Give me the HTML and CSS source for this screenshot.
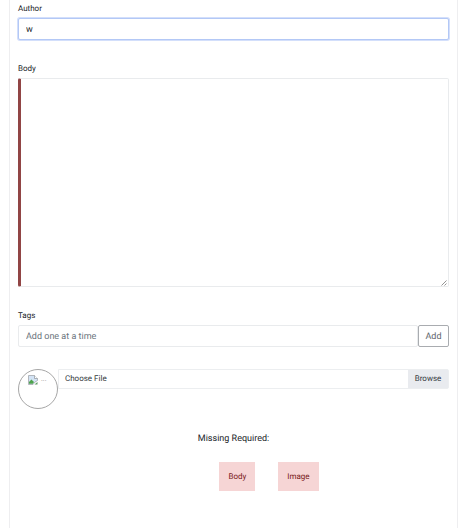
FILE: index.html
```html
<!DOCTYPE html>
<html lang="en">
<head>
<meta charset="utf-8">
<title>Post</title>
<link rel="stylesheet" href="styles.css">
</head>
<body>
<form class="card">
  <label class="label" for="author">Author</label>
  <input class="input focused" id="author" value="w">
  <label class="label body-label" for="body">Body</label>
  <div class="area-wrap">
    <textarea class="area" id="body"></textarea>
    <svg class="grip" viewBox="0 0 6 6"><path d="M.5 5.5l5-5M3.5 5.5l2-2"/></svg>
  </div>
  <label class="label tags-label" for="tags">Tags</label>
  <div class="tags">
    <input class="input" id="tags" placeholder="Add one at a time">
    <button class="add" type="button">Add</button>
  </div>
  <div class="upload">
    <div class="avatar">
      <svg class="broken" viewBox="0 0 10 10">
        <path d="M.5.5h6l3 3v2L7 7 5 9.5H.5z" fill="#d3e3f5" stroke="#a3a8ad" stroke-width=".8"/>
        <path d="M6.5.5v3h3" fill="#fff" stroke="#8e9499" stroke-width=".7"/>
        <path d="M1 8.8V7l2.4-2.4L6 7 4.8 8.8z" fill="#4ea24b"/>
        <path d="M6.5 9.5l3-2.5v2.5z" fill="#5c9b62"/>
      </svg>
      <span>...</span>
    </div>
    <div class="file"><span class="file-name">Choose File</span><span class="browse">Browse</span></div>
  </div>
  <p class="missing">Missing Required:</p>
  <div class="badges"><span class="badge">Body</span><span class="badge">Image</span></div>
</form>
</body>
</html>
```
FILE: styles.css
```css
* { box-sizing: border-box; }
body { margin: 0; background: #fff; font-family: Roboto, sans-serif; color: #212529; height: 528px; overflow: hidden; text-rendering: geometricPrecision; }
.card { width: 449px; height: 528px; margin-left: 9px; padding: 3px 8px 0; border: solid #eeeef0; border-width: 0 1px; }
.label { display: block; height: 12px; line-height: 12px; font-size: 8px; font-weight: 400; }
.input { display: block; width: 100%; height: 22px; margin: 0; padding: 1px 7px 0; border: 1px solid #e9ebed; border-radius: 2px; font: 9px Roboto, sans-serif; color: #343a40; outline: 0; text-rendering: geometricPrecision; }
.input::placeholder { color: #6c757d; opacity: 1; }
.focused { margin-top: 3px; border-color: #b3c8f6; box-shadow: 0 0 0 1px #d3dffb; color: #212529; }
.body-label { margin-top: 23px; }
.area-wrap { position: relative; height: 209px; margin-top: 3px; }
.area { display: block; width: 100%; height: 100%; resize: none; border: 1px solid #e9ebed; border-left: 3px solid #914545; border-radius: 2px; outline: 0; }
.grip { position: absolute; right: 2px; bottom: 1px; width: 6px; height: 6px; fill: none; stroke: #777; stroke-width: .8; }
.tags-label { margin-top: 23px; }
.tags { display: flex; margin-top: 3px; }
.tags .input { flex: 1; }
.add { width: 31px; height: 22px; padding: 1px 0 0; border: 1px solid #a9acb0; border-radius: 2px; background: #fff; color: #5f666d; font: 9px Roboto, sans-serif; text-rendering: geometricPrecision; }
.upload { display: flex; align-items: flex-start; margin-top: 22px; }
.avatar { display: flex; width: 40px; height: 40px; margin-top: -.5px; padding: 5px 0 0 9px; gap: 3px; border: 1px solid #a6a6a6; border-radius: 50%; font-size: 7px; line-height: 9px; color: #777; }
.broken { width: 10px; height: 10px; }
.file { flex: 1; display: flex; height: 20px; border: 1px solid #eceef0; border-radius: 0 2px 2px 0; font-size: 8px; line-height: 18px; color: #343a40; }
.file-name { flex: 1; padding-left: 6px; }
.browse { width: 40px; text-align: center; background: #e9ebef; }
.missing { margin: 23.5px 0 0; height: 14px; line-height: 14px; text-align: center; font-size: 9px; }
.badges { display: flex; justify-content: center; gap: 23px; margin: 16px 0 0 71px; }
.badge { height: 29px; padding: 0 9px; line-height: 29px; background: #f6d5d5; color: #7a2020; font-size: 8px; }
```
